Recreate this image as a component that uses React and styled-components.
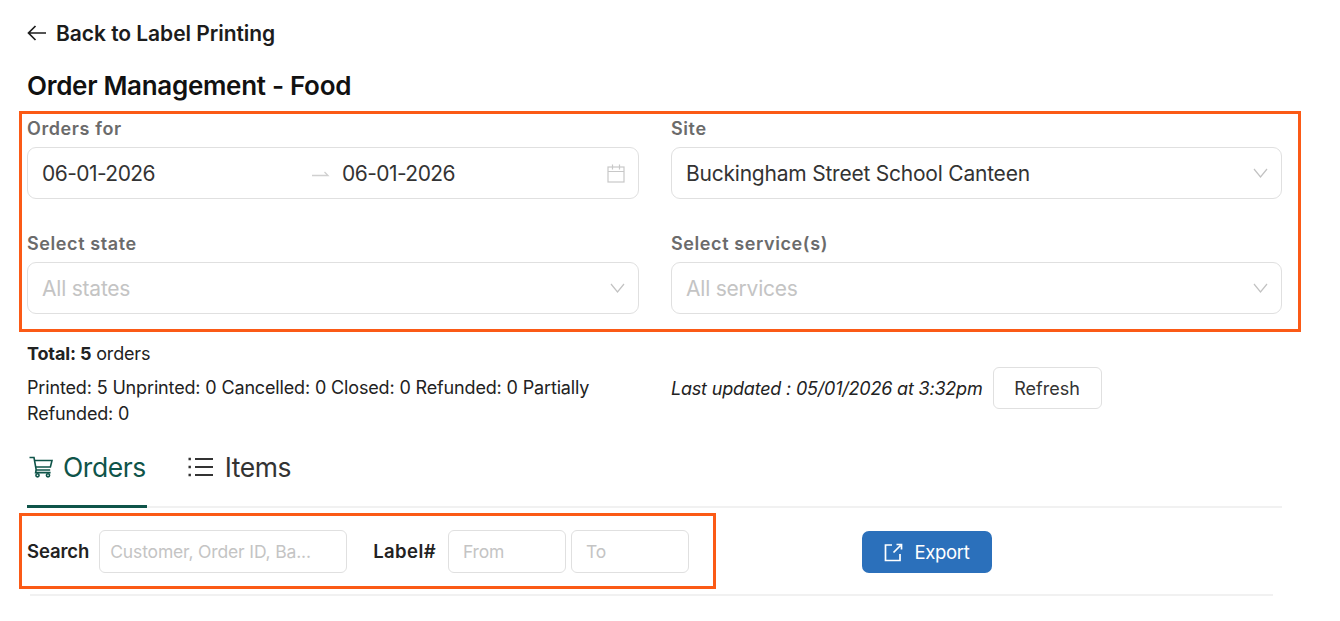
import React from "react";
import styled, { createGlobalStyle } from "styled-components";

const GlobalStyle = createGlobalStyle`
  html, body {
    margin: 0;
    background: #fff;
    color: #1c1c1c;
    font-family: "Inter", "Liberation Sans", sans-serif;
  }
`;

const Page = styled.div`
  width: 1340px;
  height: 621px;
  overflow: hidden;
  box-sizing: border-box;
  padding: 19px 58px 0 27px;
`;

const BackLink = styled.a`
  display: flex;
  align-items: center;
  gap: 10px;
  height: 28px;
  font-size: 21px;
  font-weight: 600;
  letter-spacing: -0.05px;
  color: #1c1c1c;
`;

const Title = styled.h1`
  margin: 21px 0 0;
  font-size: 26px;
  line-height: 36px;
  font-weight: 600;
  letter-spacing: -0.3px;
  color: #111;
`;

const FilterFrame = styled.section`
  box-sizing: border-box;
  width: 1282px;
  height: 221px;
  margin: 7px 0 0 -8px;
  padding: 4px 15px 0 5px;
  border: 3px solid #fb5a16;
  display: grid;
  grid-template-columns: 612px 611px;
  column-gap: 32px;
  align-content: start;
  row-gap: 34px;
`;

const Field = styled.div`
  display: flex;
  flex-direction: column;
  gap: 7px;
`;

const FieldLabel = styled.label`
  font-size: 18px;
  line-height: 22px;
  font-weight: 600;
  letter-spacing: 0.6px;
  color: #6b6b6b;
`;

const Control = styled.div`
  box-sizing: border-box;
  height: 52px;
  padding: 0 13px 0 14px;
  display: flex;
  align-items: center;
  justify-content: space-between;
  border: 1.5px solid #e0e0e0;
  border-radius: 9px;
  font-size: 21px;
  letter-spacing: -0.22px;
  color: ${(p) => (p.$placeholder ? "#c4c4c4" : "#333")};
  svg { flex: none; }
`;

const DateValue = styled.span`
  width: ${(p) => p.$width}px;
`;

const ArrowSlot = styled.span`
  display: flex;
  width: 30px;
`;

const DateGroup = styled.span`
  display: flex;
  align-items: center;
  letter-spacing: -0.55px;
`;

const Stats = styled.div`
  display: grid;
  grid-template-columns: 644px auto;
  margin-top: 8px;
  font-size: 18px;
  letter-spacing: -0.15px;
  color: #222;
`;

const Total = styled.div`
  grid-column: 1 / -1;
  line-height: 27px;
  b { font-weight: 700; }
`;

const Counts = styled.div`
  margin-top: 8px;
  line-height: 26px;
  width: 590px;
`;

const UpdatedRow = styled.div`
  display: flex;
  align-items: flex-start;
  gap: 10px;
`;

const Updated = styled.em`
  margin-top: 8px;
  line-height: 27px;
  font-style: italic;
  letter-spacing: -0.2px;
`;

const RefreshButton = styled.button`
  box-sizing: border-box;
  width: 109px;
  height: 42px;
  padding-top: 2px;
  background: #fff;
  border: 1.5px solid #e0e0e0;
  border-radius: 6px;
  font: inherit;
  font-size: 18px;
  color: #333;
`;

const Tabs = styled.nav`
  display: flex;
  gap: 41px;
  height: 77px;
  margin-top: 4px;
  border-bottom: 2px solid #f1f1f1;
  box-sizing: border-box;
`;

const Tab = styled.div`
  display: flex;
  align-items: center;
  gap: ${(p) => (p.$active ? 10 : 12)}px;
  box-sizing: border-box;
  height: 77px;
  padding: 0 1px 3px ${(p) => (p.$active ? 2 : 0)}px;
  font-size: 26.5px;
  letter-spacing: -0.45px;
  color: ${(p) => (p.$active ? "#0f5449" : "#333")};
  border-bottom: 3px solid ${(p) => (p.$active ? "#0f5449" : "transparent")};
`;

const SearchRow = styled.div`
  display: flex;
  align-items: flex-start;
  margin-top: 5px;
`;

const SearchFrame = styled.div`
  box-sizing: border-box;
  width: 697px;
  height: 76px;
  margin-left: -8px;
  padding: 0 0 0 5px;
  border: 3px solid #fb5a16;
  display: flex;
  align-items: center;
`;

const SearchLabel = styled.label`
  font-size: 18.5px;
  font-weight: 600;
  letter-spacing: ${(p) => p.$spacing}px;
  color: #222;
  margin-right: ${(p) => p.$gap}px;
`;

const TextBox = styled.div`
  box-sizing: border-box;
  width: ${(p) => p.$width}px;
  height: 43px;
  margin-right: ${(p) => p.$gap}px;
  padding: 0 ${(p) => p.$inset}px;
  display: flex;
  align-items: center;
  border: 1.5px solid #e0e0e0;
  border-radius: 6px;
  font-size: 17.5px;
  letter-spacing: -0.15px;
  color: #c4c4c4;
  white-space: nowrap;
`;

const ExportButton = styled.button`
  box-sizing: border-box;
  width: 130px;
  height: 42px;
  margin: 18px 0 0 146px;
  display: flex;
  align-items: center;
  justify-content: center;
  gap: 10px;
  background: #2b70bb;
  border: none;
  border-radius: 7px;
  font: inherit;
  font-size: 18.5px;
  letter-spacing: -0.3px;
  color: #fff;
`;

const BottomRule = styled.div`
  height: 2px;
  margin: 5px 9px 0 3px;
  background: #f1f1f1;
`;

const BackArrow = () => (
  <svg width="19" height="16" viewBox="0 0 19 16" fill="none" stroke="currentColor" strokeWidth="1.7">
    <path d="M19 8H1.5M8.5 1l-7 7 7 7" />
  </svg>
);

const RangeArrow = () => (
  <svg width="18" height="10" viewBox="0 0 18 10" fill="none" stroke="#d0d0d0" strokeWidth="1.3">
    <path d="M0 7.5h16L12.5 4" />
  </svg>
);

const CalendarIcon = () => (
  <svg width="18" height="19" viewBox="0 0 18 19" fill="none" stroke="#c8c8c8" strokeWidth="1.2">
    <rect x="1" y="3" width="16" height="15" />
    <path d="M1 7.5h16M5.5 0.5v5M12.5 0.5v5" />
  </svg>
);

const SelectChevron = () => (
  <svg width="15" height="10" viewBox="0 0 15 10" fill="none" stroke="#c2c2c2" strokeWidth="1.2">
    <path d="M1 1l6.5 8L14 1" />
  </svg>
);

const CartIcon = () => (
  <svg width="24" height="22" viewBox="0 0 24 22" fill="none" stroke="currentColor" strokeWidth="1.6">
    <path d="M0.5 1.5h4.5l2.2 12.5h14" />
    <path d="M5.4 4.5H23l-1.6 6.5H6.8" />
    <path d="M7.2 14l-0.6 2.6h15" />
    <circle cx="8.5" cy="19.3" r="1.6" />
    <circle cx="19" cy="19.3" r="1.6" />
  </svg>
);

const ListIcon = () => (
  <svg width="25" height="20" viewBox="0 0 25 20" fill="none" stroke="currentColor" strokeWidth="2">
    <path d="M7 2h18M7 10h18M7 18h18" />
    <path d="M0.5 2h2.4M0.5 10h2.4M0.5 18h2.4" strokeWidth="2.4" />
  </svg>
);

const ExportIcon = () => (
  <svg width="20" height="20" viewBox="0 0 20 20" fill="none" stroke="currentColor" strokeWidth="1.7">
    <path d="M8 3H1.5v15.5H16V12" />
    <path d="M9.5 10.5L16.5 3.5M12.5 2.5h5v5" />
  </svg>
);

const App = () => (
  <Page>
    <GlobalStyle />
    <BackLink>
      <BackArrow />
      Back to Label Printing
    </BackLink>
    <Title>Order Management - Food</Title>

    <FilterFrame>
      <Field>
        <FieldLabel>Orders for</FieldLabel>
        <Control>
          <DateGroup>
            <DateValue $width={270}>06-01-2026</DateValue>
            <ArrowSlot>
              <RangeArrow />
            </ArrowSlot>
            06-01-2026
          </DateGroup>
          <CalendarIcon />
        </Control>
      </Field>
      <Field>
        <FieldLabel>Site</FieldLabel>
        <Control>
          Buckingham Street School Canteen
          <SelectChevron />
        </Control>
      </Field>
      <Field>
        <FieldLabel>Select state</FieldLabel>
        <Control $placeholder>
          All states
          <SelectChevron />
        </Control>
      </Field>
      <Field>
        <FieldLabel>Select service(s)</FieldLabel>
        <Control $placeholder>
          All services
          <SelectChevron />
        </Control>
      </Field>
    </FilterFrame>

    <Stats>
      <Total>
        <b>Total: 5</b> orders
      </Total>
      <Counts>
        Printed: 5 Unprinted: 0 Cancelled: 0 Closed: 0 Refunded: 0 Partially Refunded: 0
      </Counts>
      <UpdatedRow>
        <Updated>Last updated : 05/01/2026 at 3:32pm</Updated>
        <RefreshButton>Refresh</RefreshButton>
      </UpdatedRow>
    </Stats>

    <Tabs>
      <Tab $active>
        <CartIcon />
        Orders
      </Tab>
      <Tab>
        <ListIcon />
        Items
      </Tab>
    </Tabs>

    <SearchRow>
      <SearchFrame>
        <SearchLabel $gap={10} $spacing={-0.1}>Search</SearchLabel>
        <TextBox $width={248} $gap={26} $inset={10}>Customer, Order ID, Ba...</TextBox>
        <SearchLabel $gap={12} $spacing={0.4}>Label#</SearchLabel>
        <TextBox $width={118} $gap={5} $inset={14}>From</TextBox>
        <TextBox $width={118} $gap={0} $inset={14}>To</TextBox>
      </SearchFrame>
      <ExportButton>
        <ExportIcon />
        Export
      </ExportButton>
    </SearchRow>
    <BottomRule />
  </Page>
);

export default App;
